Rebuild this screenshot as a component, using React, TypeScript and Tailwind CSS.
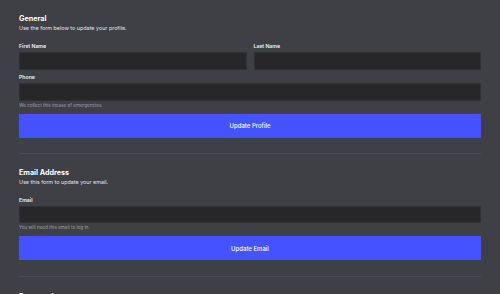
const Label = ({ children }: { children: React.ReactNode }) => (
  <label className="block text-[5.2px] leading-[8px] font-semibold text-zinc-100">
    {children}
  </label>
);

const Input = () => (
  <div className="mt-[2px] h-[17.5px] w-full bg-[#27272a] border border-[#303035]"></div>
);

const Help = ({ children }: { children: React.ReactNode }) => (
  <p className="mt-[1px] text-[4.6px] leading-[7px] text-zinc-400">{children}</p>
);

const Heading = ({ title, sub }: { title: string; sub: string }) => (
  <div>
    <h2 className="text-[7.2px] leading-[11px] font-bold text-white">{title}</h2>
    <p className="text-[5.4px] leading-[9px] text-zinc-200">{sub}</p>
  </div>
);

const Button = ({ children }: { children: React.ReactNode }) => (
  <button className="mt-[5px] h-[24px] w-full bg-[#4552ff] text-[6px] font-medium text-white">
    {children}
  </button>
);

export default function App() {
  return (
    <div
      className="h-[294px] w-[500px] bg-[#3f3f46] px-[19px] overflow-hidden"
      style={{ fontFamily: "Inter, 'Liberation Sans', sans-serif" }}
    >
      <section className="pt-[13px] pb-[15px] border-b border-[#4b4b53]">
        <Heading title="General" sub="Use the form below to update your profile." />
        <div className="mt-[9px] grid grid-cols-2 gap-x-[7px]">
          <div>
            <Label>First Name</Label>
            <Input />
          </div>
          <div>
            <Label>Last Name</Label>
            <Input />
          </div>
        </div>
        <div className="mt-[3.5px]">
          <Label>Phone</Label>
          <Input />
          <Help>We collect this incase of emergencies.</Help>
        </div>
        <Button>Update Profile</Button>
      </section>

      <section className="pt-[13px] pb-[16px] border-b border-[#4b4b53]">
        <Heading title="Email Address" sub="Use this form to update your email." />
        <div className="mt-[9px]">
          <Label>Email</Label>
          <Input />
          <Help>You will need this email to log in.</Help>
        </div>
        <Button>Update Email</Button>
      </section>

      <section className="pt-[14px] pb-[15px]">
        <Heading title="Password" sub="Use this form to update your password." />
      </section>
    </div>
  );
}
